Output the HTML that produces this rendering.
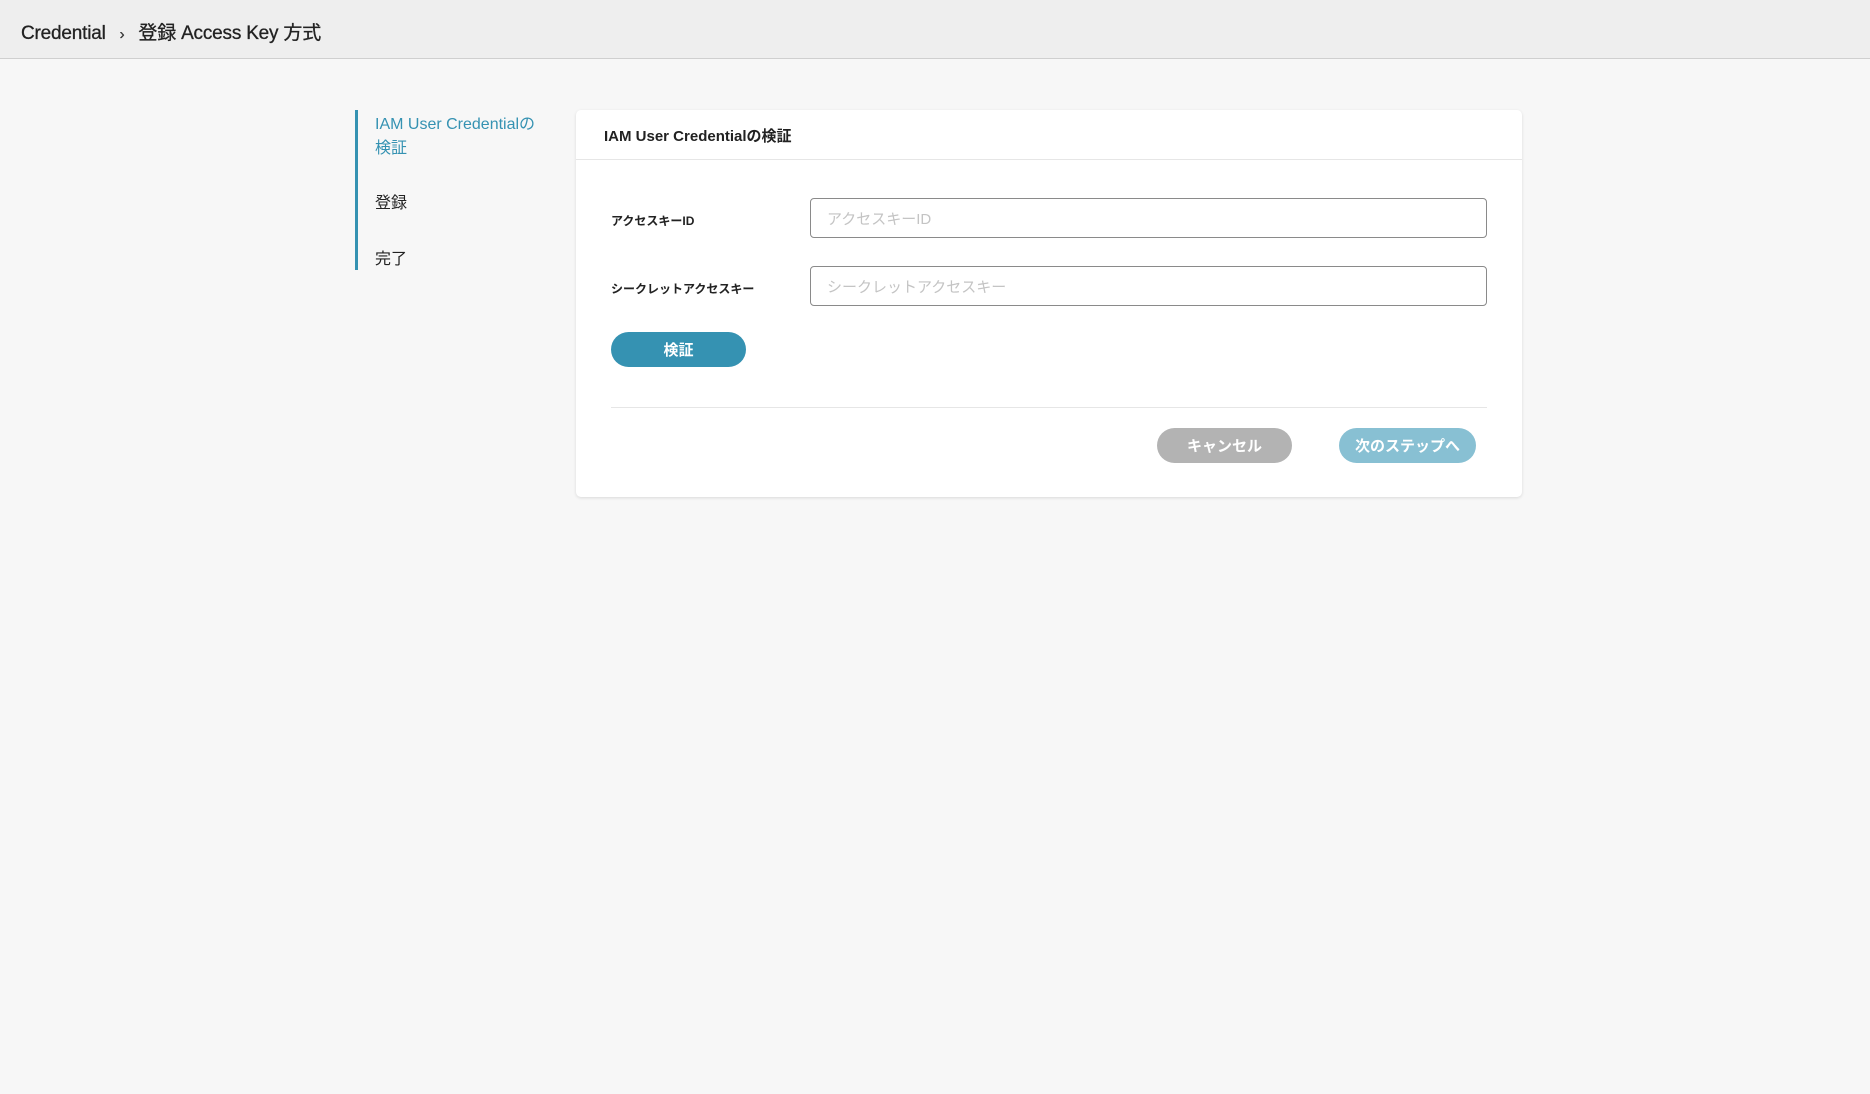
<!DOCTYPE html>
<html><head><meta charset="utf-8"><style>
*{box-sizing:border-box;margin:0;padding:0}
body{width:1870px;height:1094px;background:#f7f7f7;font-family:"Liberation Sans","Noto Sans CJK JP",sans-serif;color:#222;position:relative;overflow:hidden}
.hd{position:absolute;left:0;top:0;width:1870px;height:59px;background:#eeeeee;border-bottom:1px solid #cfcfcf}
.bc{position:absolute;left:21px;top:18px;font-size:19px;font-weight:400;color:#222;white-space:nowrap;-webkit-text-stroke:0.3px #222;letter-spacing:-0.2px}
.bc .sep{margin:0 14px 0 14px;font-size:15px;color:#444}
.bar{position:absolute;left:355px;top:110px;width:3px;height:160px;background:#3592b2}
.nv{position:absolute;left:375px;font-size:16px;line-height:24px;color:#222}
.card{position:absolute;left:576px;top:110px;width:946px;height:387px;background:#fff;border-radius:5px;box-shadow:0 1px 3px rgba(0,0,0,.12)}
.ch{height:50px;border-bottom:1px solid #e6e6e6;padding:15px 28px 0;font-size:15px;font-weight:600}
.lb{position:absolute;left:35px;font-size:12px;font-weight:700}
.in{position:absolute;left:234px;width:677px;height:40px;border:1px solid #8a8a8a;border-radius:4px;padding:2px 16px 0;line-height:38px;font-size:15px;color:#c4c4c4}
.btn{position:absolute;height:35px;border-radius:18px;color:#fff;font-size:15px;font-weight:700;text-align:center;line-height:37px}
</style></head><body>
<div class="hd"><div class="bc">Credential<span class="sep">›</span>登録 Access Key 方式</div></div>
<div class="bar"></div>
<div class="nv" style="top:113px;color:#3592b2">IAM User Credentialの<br>検証</div>
<div class="nv" style="top:192px">登録</div>
<div class="nv" style="top:248px">完了</div>
<div class="card">
<div class="ch">IAM User Credentialの検証</div>
<div class="lb" style="top:102px">アクセスキーID</div>
<div class="in" style="top:88px">アクセスキーID</div>
<div class="lb" style="top:170px">シークレットアクセスキー</div>
<div class="in" style="top:156px">シークレットアクセスキー</div>
<div class="btn" style="left:35px;top:222px;width:135px;background:#3592b2">検証</div>
<div style="position:absolute;left:35px;top:297px;width:876px;height:1px;background:#e6e6e6"></div>
<div class="btn" style="left:581px;top:318px;width:135px;background:#b3b3b3">キャンセル</div>
<div class="btn" style="left:763px;top:318px;width:137px;background:#88c0d3">次のステップへ</div>
</div>
</body></html>
